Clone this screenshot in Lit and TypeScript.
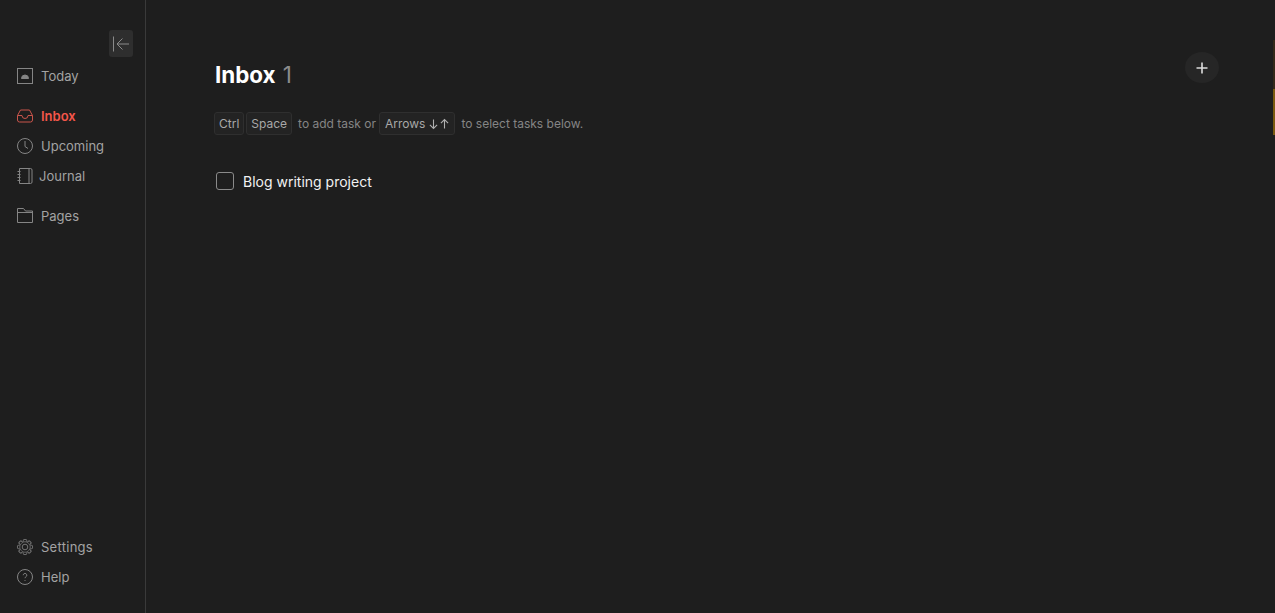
import { LitElement, html, css, svg } from "lit";
import { customElement } from "lit/decorators.js";

const ic = (body: unknown) => html`<svg class="ic" width="18" height="18" viewBox="0 0 18 18" fill="none" stroke="currentColor" stroke-width="1">${body}</svg>`;

const gear = Array.from({ length: 8 }, (_, i) => svg`<rect x="7.300" y="1.500" width="3.400" height="3" rx=".8" transform="rotate(${i * 45} 9 9)"/>`);

const icons = {
  today: ic(svg`<rect x="1.500" y="1.500" width="15" height="15"/><path d="M5.500 11.500a3.500 3.500 0 0 1 7 0z" fill="currentColor"/>`),
  inbox: ic(svg`<path d="M4.500 3h9l3 5.500V13a2 2 0 0 1-2 2h-11a2 2 0 0 1-2-2V8.500z"/><path d="M1.500 8.500H6a3 3 0 0 0 6 0h4.500"/>`),
  upcoming: ic(svg`<circle cx="9" cy="9" r="7.500"/><path d="M9 4v5.500l3 2"/>`),
  journal: ic(svg`<path d="M3.500 1.500h11a1.500 1.500 0 0 1 1.500 1.500v12a1.500 1.500 0 0 1-1.500 1.500h-11z"/><path d="M13 1.500v15M1.500 4.500h3M1.500 7.500h3M1.500 10.500h3M1.500 13.500h3"/>`),
  pages: ic(svg`<path d="M1.500 15.500V1.500h6l2 2.500h7v11.500z"/><path d="M1.500 5.500h15"/>`),
  settings: ic(svg`${gear}<circle cx="9" cy="9" r="5.500" fill="#1e1e1e" stroke="none"/><path d="M5.500 5.300a5.200 5.200 0 0 1 7 0M12.700 5.500a5.200 5.200 0 0 1 0 7M12.500 12.700a5.200 5.200 0 0 1-7 0M5.300 12.500a5.200 5.200 0 0 1 0-7" stroke-width=".8"/><circle cx="9" cy="9" r="2.800"/>`),
};

@customElement("app-root")
export class AppRoot extends LitElement {
  static styles = css`
    :host { display: block; height: 613px; background: #1e1e1e; font-family: Inter, "Noto Sans", sans-serif; color: #a3a3a3; overflow: hidden; }
    .shell { display: flex; height: 613px; position: relative; }
    aside { flex: none; border-right: 1px solid #3a3a3a; display: flex; flex-direction: column; padding: 30px 12px 21px 16px; box-sizing: border-box; width: 146px; }
    .collapse { align-self: flex-end; width: 24px; height: 27px; background: #2e2e2e; border-radius: 3px; display: flex; align-items: center; justify-content: center; color: #8a8a8a; }
    .item { display: flex; align-items: center; height: 30px; gap: 7px; font-size: 13px; color: #a3a3a3; white-space: nowrap; }
    .ic { flex: none; color: #858585; }
    .today { margin-top: 4px; }
    .inbox { margin-top: 10px; color: #f5564a; font-weight: 600; }
    .inbox .ic { color: #c9544b; }
    .journal { gap: 5px; }
    .pages { margin-top: 10px; }
    .settings-item .ic { color: #747474; }
    .settings-label { letter-spacing: .28px; }
    .spacer { flex: 1; }
    main { flex: 1; padding: 59px 0 0 68px; position: relative; }
    h1 { margin: 0; height: 32px; padding-left: 1px; font-size: 22.400px; line-height: 32px; font-weight: 700; color: #fff; display: flex; gap: 7px; }
    h1 span { font-weight: 400; color: #8c8c8c; }
    .hint { margin-top: 21px; display: flex; align-items: center; font-size: 12px; color: #858585; height: 23px; white-space: nowrap; }
    kbd { font: inherit; color: #a8a8a8; height: 21px; line-height: 21px; border: 1px solid #2f2f2f; border-radius: 3px; background: #232323; padding: 0 4px; margin-right: 2px; display: flex; align-items: center; }
    .k2 { margin-right: 6px; }
    .arrows { margin: 0 6px 0 3px; padding: 0 5px; gap: 2px; }
    .arrows svg { display: block; }
    .arrows svg:first-of-type { margin-left: 2px; }
    .task { display: flex; align-items: center; margin-top: 34px; height: 24px; padding-left: 2px; gap: 9px; font-size: 14px; color: #f2f2f2; }
    .box { width: 16px; height: 16px; border: 1px solid #8a8a8a; border-radius: 3px; }
    .add { position: absolute; top: 52px; right: 56px; width: 34px; height: 31px; border-radius: 50%; background: #262626; display: flex; align-items: center; justify-content: center; }
    .stripe-a { position: absolute; right: 0; top: 40px; width: 2px; height: 49px; background: #34291a; }
    .stripe-b { position: absolute; right: 0; top: 89px; width: 2px; height: 46px; background: #7a5a10; }
  `;

  render() {
    const arrow = (d: string) => html`<svg width="9" height="12" viewBox="0 0 10 12" fill="none" stroke="#b0b0b0" stroke-width="1.200"><path d=${d}/></svg>`;
    return html`
      <div class="shell">
        <aside>
          <div class="collapse">
            <svg width="18" height="18" viewBox="0 0 18 18" fill="none" stroke="currentColor" stroke-width="1"><path d="M1.500 1.500v15M17 9H5M10.500 3.500 5 9l5.500 5.500"/></svg>
          </div>
          <div class="item today">${icons.today}<span>Today</span></div>
          <div class="item inbox">${icons.inbox}<span>Inbox</span></div>
          <div class="item">${icons.upcoming}<span>Upcoming</span></div>
          <div class="item journal">${icons.journal}<span>Journal</span></div>
          <div class="item pages">${icons.pages}<span>Pages</span></div>
          <div class="spacer"></div>
          <div class="item settings-item">${icons.settings}<span class="settings-label">Settings</span></div>
          <div class="item">
            ${ic(svg`<circle cx="9" cy="9" r="7.500"/><path d="M7.200 7.200a1.800 1.800 0 1 1 2.700 1.600c-.6.400-.9.700-.9 1.400"/><circle cx="9" cy="12.500" r=".6" fill="currentColor" stroke="none"/>`)}
            <span>Help</span>
          </div>
        </aside>
        <main>
          <h1>Inbox <span>1</span></h1>
          <div class="hint">
            <kbd>Ctrl</kbd><kbd class="k2">Space</kbd>
            <span>to add task or</span>
            <kbd class="arrows">Arrows ${arrow("M5 1v10M1 7l4 4 4-4")}${arrow("M5 11V1M1 5l4-4 4 4")}</kbd>
            <span>to select tasks below.</span>
          </div>
          <div class="task"><div class="box"></div><span>Blog writing project</span></div>
          <div class="add">
            <svg width="12" height="12" viewBox="0 0 12 12" stroke="#dcdcdc" stroke-width="1.600"><path d="M6 .500v11M.500 6h11"/></svg>
          </div>
          <div class="stripe-a"></div>
          <div class="stripe-b"></div>
        </main>
      </div>
    `;
  }
}
